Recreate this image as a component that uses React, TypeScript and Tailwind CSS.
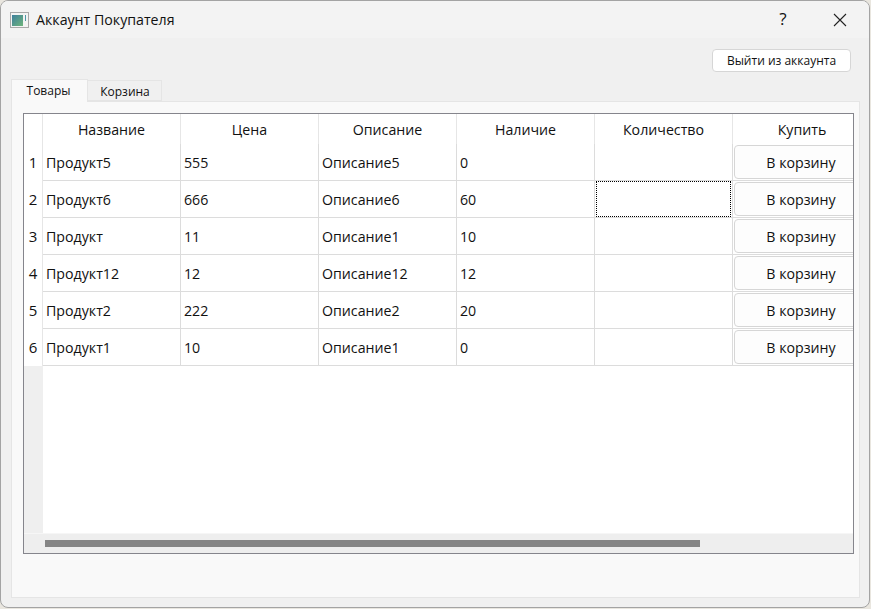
const columns = ["Название", "Цена", "Описание", "Наличие", "Количество"];

const products = [
  { name: "Продукт5", price: "555", desc: "Описание5", stock: "0" },
  { name: "Продукт6", price: "666", desc: "Описание6", stock: "60" },
  { name: "Продукт", price: "11", desc: "Описание1", stock: "10" },
  { name: "Продукт12", price: "12", desc: "Описание12", stock: "12" },
  { name: "Продукт2", price: "222", desc: "Описание2", stock: "20" },
  { name: "Продукт1", price: "10", desc: "Описание1", stock: "0" },
];

function WindowIcon() {
  return (
    <svg width="19" height="16" viewBox="0 0 19 16" className="shrink-0">
      <defs>
        <linearGradient id="wi" x1="0" y1="0" x2="1" y2="1">
          <stop offset="0" stopColor="#3d7f9c" />
          <stop offset="1" stopColor="#6fb57c" />
        </linearGradient>
      </defs>
      <rect x="0.5" y="0.5" width="18" height="15" fill="#f4f4f4" stroke="#a9a9a9" />
      <rect x="2" y="3" width="11" height="11" fill="url(#wi)" />
      <rect x="15" y="3" width="1" height="6" fill="#4f98a8" />
    </svg>
  );
}

function Cell({ children }: { children?: React.ReactNode }) {
  return (
    <div className="w-[138px] shrink-0 h-full flex items-center pl-[3px] pt-[2px] border-r border-[#dcdcdc] text-[14.2px]">
      {children}
    </div>
  );
}

export default function App() {
  return (
    <div className="w-[871px] h-[609px] overflow-hidden bg-[#e9e6df] font-['Open_Sans',sans-serif] text-[#111]">
      <div className="w-[870px] h-[608px] flex flex-col rounded-[8px] border border-[#a3a3a3] overflow-hidden bg-[#f0f0f0]">
        <div className="h-[37px] shrink-0 bg-[#f3f3f3] flex items-center pl-[9px]">
          <WindowIcon />
          <span className="ml-[7px] text-[14.2px] flex-1">Аккаунт Покупателя</span>
          <span className="text-[17px] leading-none w-[14px] text-center -mt-[2px]">?</span>
          <svg width="14" height="14" viewBox="0 0 14 14" className="ml-[43px] mr-[22px]">
            <path d="M1 1 L13 13 M13 1 L1 13" stroke="#222" strokeWidth="1.1" fill="none" />
          </svg>
        </div>

        <div className="flex justify-end h-[41px] shrink-0 pt-[11px] pr-[18px]">
          <button className="w-[139px] h-[23px] bg-white border border-[#d6d6d6] rounded-[4px] text-[12px] leading-none">
            Выйти из аккаунта
          </button>
        </div>

        <div className="flex items-end h-[22px] shrink-0 pl-[10px] text-[12px]">
          <div className="w-[77px] h-[23px] -mb-px z-10 pr-[2px] bg-[#f9f9f9] border border-b-0 border-[#e5e5e5] flex items-center justify-center">
            Товары
          </div>
          <div className="w-[74px] h-[21px] pt-[3px] pl-px bg-[#f0f0f0] border border-l-0 border-[#e5e5e5] flex items-center justify-center">
            Корзина
          </div>
        </div>

        <div className="ml-[10px] w-[849px] h-[497px] shrink-0 bg-[#f9f9f9] border border-[#e5e5e5] pt-[11px] pl-[11px]">
          <div className="w-[831px] h-[441px] border border-[#85858c] bg-white flex flex-col overflow-hidden">
            <div className="flex flex-1 min-h-0">
              <div className="w-[19px] shrink-0 flex flex-col bg-[#efefef]">
                <div className="h-[30px] bg-white border-r border-[#e6e6e6]" />
                {products.map((_, i) => (
                  <div
                    key={i}
                    className="h-[37px] bg-white border-r border-[#e6e6e6] flex items-center justify-center text-[15px]"
                  >
                    {i + 1}
                  </div>
                ))}
              </div>
              <div className="flex-1 min-w-0 overflow-hidden">
                <div className="flex h-[30px]">
                  {columns.map((c) => (
                    <div
                      key={c}
                      className="w-[138px] shrink-0 pt-[2px] flex items-center justify-center border-r border-[#e6e6e6] text-[14.2px]"
                    >
                      {c}
                    </div>
                  ))}
                  <div className="w-[138px] shrink-0 pt-[2px] flex items-center justify-center text-[14.2px]">
                    Купить
                  </div>
                </div>
                {products.map((p, i) => (
                  <div key={p.name} className="flex h-[37px] border-b border-[#dcdcdc]">
                    <Cell>{p.name}</Cell>
                    <Cell>{p.price}</Cell>
                    <Cell>{p.desc}</Cell>
                    <Cell>{p.stock}</Cell>
                    <Cell>
                      {i === 1 && (
                        <div className="w-[135px] h-[36px] -ml-[2px] -mt-[2px] border border-dotted border-black" />
                      )}
                    </Cell>
                    <div className="w-[138px] shrink-0 pl-px pt-px">
                      <button className="w-[136px] h-[34px] pt-[2px] pr-[2px] bg-[#fdfdfd] border border-[#d6d6d6] rounded-[4px] text-[14.2px]">
                        В корзину
                      </button>
                    </div>
                  </div>
                ))}
              </div>
            </div>
            <div className="h-[20px] shrink-0 bg-[#eeeeee] border-t border-[#f6f6f6] pl-[21px] pt-[6px]">
              <div className="w-[655px] h-[7px] bg-[#858585]" />
            </div>
          </div>
        </div>
      </div>
    </div>
  );
}
